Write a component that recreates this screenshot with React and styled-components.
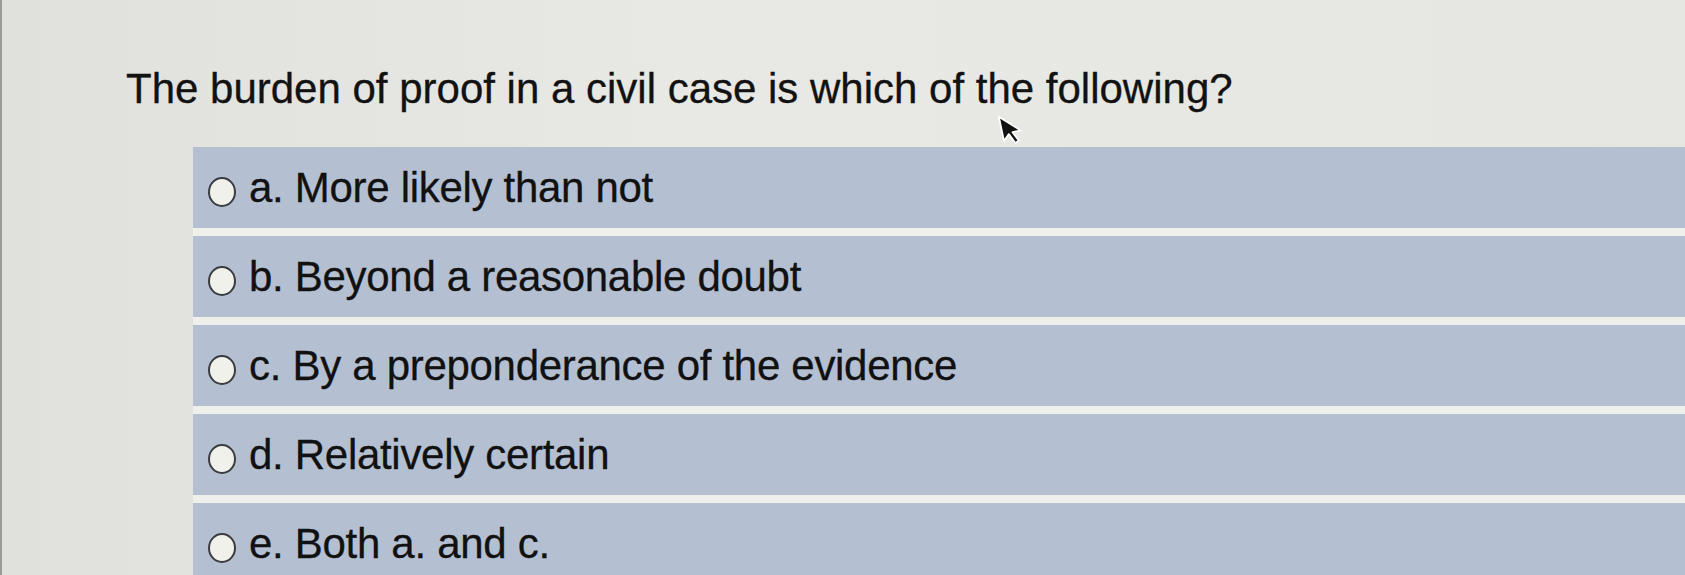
import React from 'react'
import styled, { createGlobalStyle } from 'styled-components'

const GlobalStyle = createGlobalStyle`
  html, body {
    margin: 0;
    padding: 0;
    background: #e3e3df;
  }
  body {
    font-family: "Liberation Sans", Arial, sans-serif;
    overflow: hidden;
  }
`

const Page = styled.div`
  position: relative;
  width: 1685px;
  height: 575px;
  overflow: hidden;
  box-sizing: border-box;
  border-left: 2px solid #9a9a98;
  background: linear-gradient(90deg, #e0e0dc 0%, #e8e8e4 40%, #e6e6e2 100%);
`

const Question = styled.h1`
  margin: 0;
  padding: 68px 0 0 124px;
  font-size: 42px;
  line-height: 1;
  font-weight: 400;
  color: #121212;
  letter-spacing: 0;
  -webkit-text-stroke: 0.3px #121212;
`

const Options = styled.ul`
  list-style: none;
  margin: 37px 0 0 191px;
  padding: 0;
  display: flex;
  flex-direction: column;
  gap: 8px;
  background: #efefeb;
`

const Option = styled.li`
  height: 81px;
  display: flex;
  align-items: center;
  gap: 13px;
  padding-left: 15px;
  background: #b4c0d1;
  font-size: 42px;
  color: #111;
  letter-spacing: -0.3px;
  -webkit-text-stroke: 0.3px #111;
`

const Radio = styled.span`
  flex: none;
  width: 24px;
  height: 26px;
  border-radius: 50%;
  border: 2.5px solid #3a3c40;
  background: #f1f1ec;
  margin-top: 8px;
`

const Cursor = styled.svg`
  position: absolute;
  left: 997px;
  top: 112px;
  width: 26px;
  height: 36px;
  transform: rotate(-12deg);
`

const options = [
  'a. More likely than not',
  'b. Beyond a reasonable doubt',
  'c. By a preponderance of the evidence',
  'd. Relatively certain',
  'e. Both a. and c.',
]

const App = () => {
  return (
    <Page>
      <GlobalStyle />
      <Question>The burden of proof in a civil case is which of the following?</Question>
      <Options>
        {options.map(text => (
          <Option key={text}>
            <Radio />
            <span>{text}</span>
          </Option>
        ))}
      </Options>
      <Cursor viewBox="0 0 22 32">
        <path
          d="M2 2 L2 24 L7.5 19 L11.5 28 L15 26.5 L11 18 L18.5 18 Z"
          fill="#111"
          stroke="#fff"
          strokeWidth="1.6"
          strokeLinejoin="round"
        />
      </Cursor>
    </Page>
  )
}

export default App
